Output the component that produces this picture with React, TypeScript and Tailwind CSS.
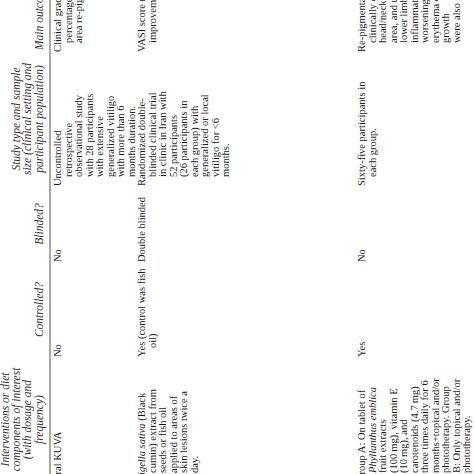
import React from "react";

type L = React.ReactNode;

function Cell({ lines }: { lines: L[] }) {
  return (
    <div className="whitespace-nowrap">
      {lines.map((l, i) => (
        <div key={i} className={i === 0 ? "" : "pl-[9px]"}>
          {l}
        </div>
      ))}
    </div>
  );
}

function Head({ lines, align = "center" }: { lines: string[]; align?: "center" | "left" }) {
  return (
    <div className={align === "center" ? "text-center whitespace-nowrap" : "text-left whitespace-nowrap pl-[2px]"}>
      {lines.map((l, i) => (
        <div key={i}>{l}</div>
      ))}
    </div>
  );
}

const cols = "grid grid-cols-[125px_95px_76px_134px_160px]";

export default function App() {
  return (
    <div className="w-[474px] h-[474px] overflow-hidden bg-white">
      <div className="w-[474px] h-[474px] -rotate-90">
        <div className="ml-[-8px] w-[600px] text-[10.5px] leading-[10.5px] text-[#1c1c1c] font-['Liberation_Serif',serif]">
          <div className={`${cols} h-[49px] items-end pb-[6px] italic text-[11.5px] leading-[11.2px] text-[#333333]`}>
            <Head lines={["Interventions or diet", "components of interest", "(with dosage and", "frequency)"]} />
            <Head lines={["Controlled?"]} />
            <Head lines={["Blinded?"]} />
            <Head lines={["Study type and sample", "size (clinical setting and", "participant population)"]} />
            <Head lines={["Main outcomes"]} align="left" />
          </div>
          <div className="h-[2px] bg-[#a8a8a8]" />
          <div className={`${cols} pt-[2px]`}>
            <Cell lines={["Oral KUVA"]} />
            <Cell lines={["No"]} />
            <Cell lines={["No"]} />
            <Cell
              lines={[
                "Uncontrolled",
                "retrospective",
                "observational study",
                "with 28 participants",
                "with extensive",
                "generalized vitiligo",
                "with more than 6",
                "months duration.",
              ]}
            />
            <Cell lines={["Clinical grading of", "percentage of", "area re-pigmentation."]} />
          </div>
          <div className={`${cols} min-h-[220px]`}>
            <Cell
              lines={[
                <span key="a">
                  <i>Nigella sativa</i> (Black
                </span>,
                "cumin) extract from",
                "seeds or fish oil",
                "applied to areas of",
                "skin lesions twice a",
                "day.",
              ]}
            />
            <Cell lines={["Yes (control was fish", "oil)"]} />
            <Cell lines={["Double blinded"]} />
            <Cell
              lines={[
                "Randomized double-",
                "blinded clinical trial",
                "in clinic in Iran with",
                "52 participants",
                "(26 participants in",
                "each group) with",
                "generalized or local",
                "vitiligo for <6",
                "months.",
              ]}
            />
            <Cell lines={["VASI score reduction", "improvement in both"]} />
          </div>
          <div className={cols}>
            <Cell
              lines={[
                "Group A: On tablet of",
                <i key="p">Phyllanthus emblica</i>,
                "fruit extracts",
                "(100\u2009mg), vitamin E",
                "(10\u2009mg), and",
                "carotenoids (4.7\u2009mg)",
                "three times daily for 6",
                "months+topical and/or",
                "phototherapy. Group",
                "B: Only topical and/or",
                "phototherapy.",
              ]}
            />
            <Cell lines={["Yes"]} />
            <Cell lines={["No"]} />
            <Cell lines={["Sixty-five participants in", "each group."]} />
            <Cell
              lines={[
                "Re-pigmentation was",
                "clinically observed in",
                "head/neck",
                "area, and upper and",
                "lower limbs. No",
                "inflammation,",
                "worsening of",
                "erythema or hair",
                "growth",
                "were also seen.",
              ]}
            />
          </div>
        </div>
      </div>
    </div>
  );
}
